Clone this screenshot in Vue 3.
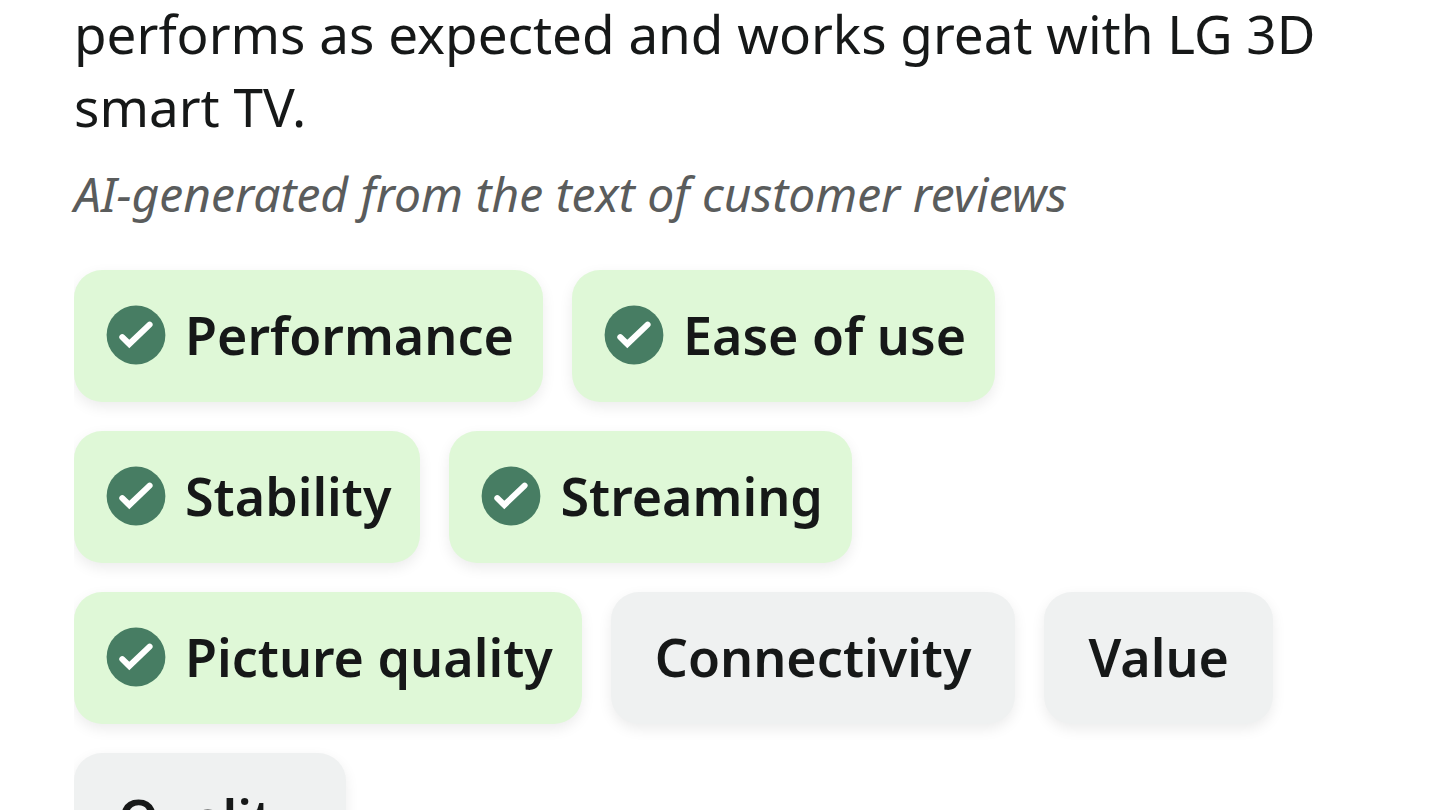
<script setup>
import { ref } from 'vue'

const aspects = ref([
  { name: 'Performance', positive: true },
  { name: 'Ease of use', positive: true },
  { name: 'Stability', positive: true },
  { name: 'Streaming', positive: true },
  { name: 'Picture quality', positive: true },
  { name: 'Connectivity', positive: false },
  { name: 'Value', positive: false },
  { name: 'Quality', positive: false },
])

const selected = ref(null)

const select = (name) => {
  selected.value = selected.value === name ? null : name
}
</script>

<template>
  <main class="reviews">
    <p class="summary">performs as expected and works great with LG 3D smart TV.</p>
    <p class="disclaimer">AI-generated from the text of customer reviews</p>
    <div class="aspects">
      <button
        v-for="aspect in aspects"
        :key="aspect.name"
        type="button"
        :class="{ aspect: true, positive: aspect.positive }"
        :aria-pressed="selected === aspect.name"
        @click="select(aspect.name)"
      >
        <svg v-if="aspect.positive" class="check" viewBox="0 0 60 60" aria-hidden="true">
          <circle cx="30" cy="30" r="29.4" fill="#477d63" />
          <path
            d="M16.3 32.2 L23.3 39 L43.6 19.6"
            fill="none"
            stroke="#fff"
            stroke-width="6"
            stroke-linecap="round"
            stroke-linejoin="miter"
          />
        </svg>
        <span>{{ aspect.name }}</span>
      </button>
    </div>
  </main>
</template>

<style>
html,
body {
  background: #fff;
}

body {
  margin: 0;
  overflow: hidden;
}
</style>

<style scoped>
.reviews {
  height: 100vh;
  box-sizing: border-box;
  padding: 0 74px;
  overflow: hidden;
  color: #161818;
  font-family: 'Noto Sans', 'Open Sans', sans-serif;
}

.summary {
  margin: -3px 0 0;
  font-size: 53px;
  line-height: 73px;
}

.disclaimer {
  margin: 18px 0 0;
  color: #5a5c5c;
  font-size: 48px;
  font-style: italic;
  line-height: 66px;
}

.aspects {
  display: flex;
  flex-wrap: wrap;
  gap: 29px;
  margin-top: 43px;
  overflow-x: clip;
}

.aspect {
  display: flex;
  align-items: center;
  gap: 19px;
  height: 132px;
  padding: 0 44px 3px;
  border: none;
  border-radius: 28px;
  background: #eff1f1;
  box-shadow: 0 5px 14px rgba(15, 17, 17, 0.08);
  color: inherit;
  font-family: inherit;
  font-size: 52px;
  font-weight: 600;
  cursor: pointer;
}

.aspect.positive {
  padding: 0 29px 3px 32px;
  background: #dff8d7;
}

.check {
  width: 60px;
  height: 60px;
}
</style>
